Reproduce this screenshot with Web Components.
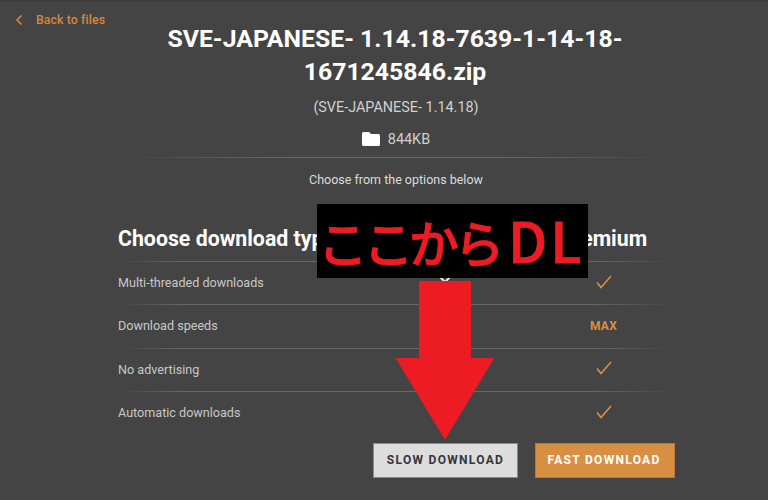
<!DOCTYPE html>
<html lang="en"><head><meta charset="utf-8"><title>Download</title>
<style>
html,body{margin:0;padding:0;height:100%;overflow:hidden}
body{background:#444;font-family:Roboto,"Liberation Sans",sans-serif;color:#fff}
</style></head><body>
<dl-page>
  <dl-header slot="header"></dl-header>
  <dl-table slot="table">
    <dl-row label="Multi-threaded downloads" free="x" premium="check"></dl-row>
    <dl-row label="Download speeds" free="" premium="MAX"></dl-row>
    <dl-row label="No advertising" free="" premium="check"></dl-row>
    <dl-row label="Automatic downloads" free="" premium="check"></dl-row>
  </dl-table>
  <dl-button slot="actions" kind="slow">SLOW DOWNLOAD</dl-button>
  <dl-button slot="actions" kind="fast">FAST DOWNLOAD</dl-button>
  <dl-callout slot="overlay"></dl-callout>
</dl-page>
<script>
const CHECK='<svg width="16" height="14" viewBox="0 0 16 14" fill="none" stroke="#d98f41" stroke-width="1.6"><path d="M1 7.500 5 12.500 15 1"/></svg>';
const CROSS='<svg width="14" height="14" viewBox="0 0 14 14" fill="none" stroke="#eeeeee" stroke-width="1.8"><path d="M1 1 13 13M13 1 1 13"/></svg>';
function def(name,html,init){
  customElements.define(name,class extends HTMLElement{
    connectedCallback(){
      if(this.shadowRoot)return;
      const r=this.attachShadow({mode:'open'});
      r.innerHTML=html;
      if(init)init.call(this,r);
    }
  });
}
def('dl-page',`<style>
:host{display:block;position:relative;width:768px;height:500px;overflow:hidden;background:linear-gradient(#3a3a3a,#444 3px);box-sizing:border-box}
.wrap{display:flex;flex-direction:column;align-items:stretch}
.main{width:557px;margin-left:118px;display:flex;flex-direction:column}
.actions{display:flex;justify-content:flex-end;gap:17px;margin-top:8.800px}
</style>
<div class="wrap"><slot name="header"></slot>
<div class="main"><slot name="table"></slot><div class="actions"><slot name="actions"></slot></div></div></div>
<slot name="overlay"></slot>`);
def('dl-header',`<style>
:host{display:block}
.top{display:grid;height:88px;padding-top:12px;box-sizing:border-box}
.top>*{grid-area:1/1}
.back{display:flex;align-items:center;gap:13px;align-self:start;justify-self:start;margin-left:15px;color:#d6873c;font-size:12.300px;font-weight:500;height:16px;letter-spacing:.1px}
h1{margin:11px 0 0 23px;text-align:center;font-size:24.800px;line-height:32.500px;font-weight:700;color:#fff;width:744px;box-sizing:border-box;padding:0 120px}
.sub{margin:0 0 0 24px;width:744px;text-align:center;font-size:14.400px;line-height:20px;color:#d0d0d0;padding-top:10px;box-sizing:border-box}
.size{margin-left:24px;width:744px;display:flex;justify-content:center;align-items:center;gap:8px;font-size:14.400px;color:#d0d0d0;height:20px;margin-top:11px}
.rule{height:1px;margin:8px 0 0 124px;width:544px;background:linear-gradient(90deg,transparent,#6a6a6a 30%,#6a6a6a 70%,transparent)}
.choose{margin-left:24px;width:744px;text-align:center;font-size:12.500px;line-height:16px;color:#dcdcdc;margin-top:14px}
</style>
<div class="top"><div class="back"><svg width="8" height="12" viewBox="0 0 8 12" fill="none" stroke="#d6873c" stroke-width="1.6"><path d="M6.500 1.500 2 6 6.500 10.500"/></svg><span>Back to files</span></div>
<h1>SVE-JAPANESE- 1.14.18-7639-1-14-18-1671245846.zip</h1></div>
<div class="sub">(SVE-JAPANESE- 1.14.18)</div>
<div class="size"><svg width="18" height="14" viewBox="0 0 18 14"><path fill="#fff" d="M1.500 0H7l2 2h7.500A1.500 1.500 0 0 1 18 3.500v9a1.500 1.500 0 0 1-1.500 1.500h-15A1.500 1.500 0 0 1 0 12.500v-11A1.500 1.500 0 0 1 1.500 0z"/></svg><span>844KB</span></div>
<div class="rule"></div>
<div class="choose">Choose from the options below</div>`);
def('dl-table',`<style>
:host{display:block;margin-top:27px}
.head{display:grid;grid-template-columns:1fr 174px 143px;height:46px;align-items:center;font-size:21.300px;font-weight:700;color:#fff}
.head span:nth-child(n+2){text-align:center}
</style>
<div class="head"><span>Choose download type</span><span>Free</span><span>Premium</span></div>
<slot></slot>`);
def('dl-row',`<style>
:host{display:grid;grid-template-columns:1fr 174px 143px;height:43.300px;align-items:center;font-size:12.600px;color:#c8c8c8;background:linear-gradient(90deg,transparent,#686868 12%,#686868 85%,transparent) top/100% 1px no-repeat;box-sizing:border-box}
.c{display:flex;justify-content:center;align-items:center;transform:translateY(-1px)}
.max{color:#d98f41;font-weight:700;font-size:12px;letter-spacing:.3px;display:block;transform:translateY(1px)}
</style><span id="l"></span><span class="c" id="f"></span><span class="c" id="p"></span>`,function(r){
  const fill=(el,v)=>{ if(v==='check') el.innerHTML=CHECK; else if(v==='x') el.innerHTML=CROSS; else if(v){el.innerHTML='<span class="max"></span>'; el.firstChild.textContent=v;} };
  r.getElementById('l').textContent=this.getAttribute('label');
  fill(r.getElementById('f'),this.getAttribute('free'));
  fill(r.getElementById('p'),this.getAttribute('premium'));
});
def('dl-button',`<style>
:host{display:flex;align-items:center;justify-content:center;height:35px;box-sizing:border-box;font-size:12px;font-weight:700;letter-spacing:1.300px}
:host([kind=slow]){width:145px;background:#dddddd;color:#33363b;border:1px solid #8a8a8a}
:host([kind=fast]){width:140px;background:#d98f41;color:#fff;border:1px solid #b87a38;padding-right:2px}
</style><slot></slot>`);
def('dl-callout',`<style>
:host{display:block}
.box{position:absolute;left:317px;top:204px;width:271px;height:74px;background:#000;color:#ed1c24;font-family:"Noto Sans CJK JP",sans-serif;white-space:nowrap;box-sizing:border-box;padding-left:1px;display:flex;align-items:baseline;font-weight:500;-webkit-text-stroke:.8px #ed1c24}
.k{font-size:50px;line-height:70px;letter-spacing:-4.500px}
.l{font-size:56px;line-height:70px;letter-spacing:3px;margin-left:8px}
svg{position:absolute;left:395px;top:280px}
</style><div class="box"><span class="k">ここから</span><span class="l">DL</span></div>
<svg width="100" height="160" viewBox="0 0 100 160"><path fill="#ed1c24" stroke="#ed1c24" stroke-linejoin="round" d="M24.500 1.500H75.500V78.500H98.500L50 159 1.500 78.500H24.500Z"/></svg>`);
</script>
</body></html>
